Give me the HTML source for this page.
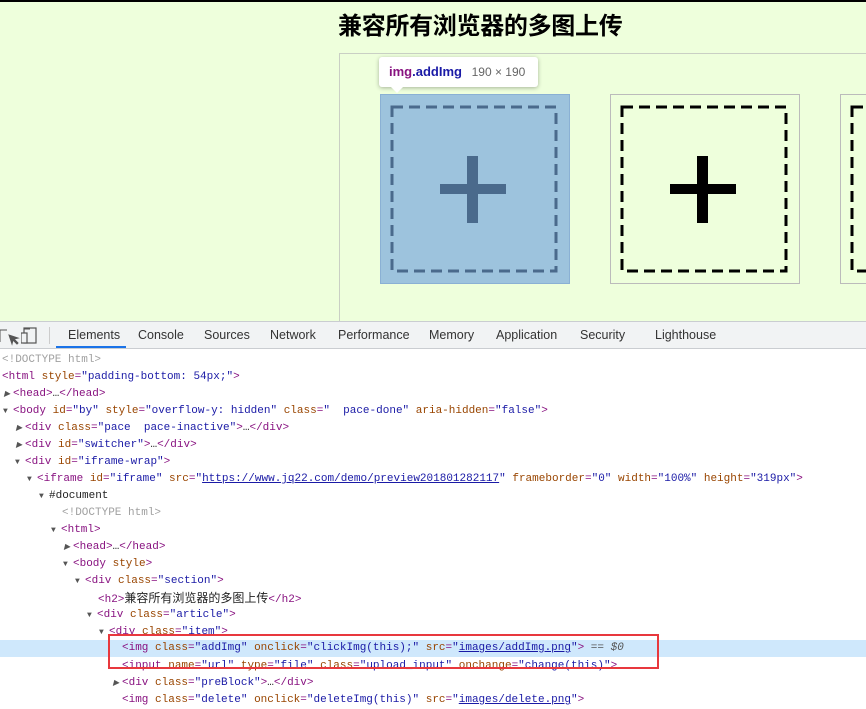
<!DOCTYPE html>
<html><head><style>
*{margin:0;padding:0;box-sizing:border-box}
body{width:866px;height:708px;overflow:hidden;background:#fff;font-family:"Liberation Sans",sans-serif;position:relative}
.top{position:absolute;left:0;top:0;width:866px;height:321px;background:#eeffdc;border-top:2px solid #000}
h2{position:absolute;left:338px;top:4px;font-size:24px;font-weight:bold;font-family:"Liberation Sans","Noto Sans CJK SC",sans-serif;color:#000;letter-spacing:-0.3px}
.art{position:absolute;left:339px;top:53px;width:540px;height:280px;border:1px solid #c9cfc4}
.box{position:absolute;top:94px;width:190px;height:190px;border:1px solid #bbb}
.tip{position:absolute;left:379px;top:57px;width:159px;height:30px;background:#fff;border-radius:3px;box-shadow:0 1px 4px rgba(0,0,0,.3);font-size:13px;line-height:30px;padding-left:10px}
.tip:after{content:"";position:absolute;left:12px;bottom:-6px;border:6px solid transparent;border-top-color:#fff;border-bottom:0}
.bar{position:absolute;left:0;top:321px;width:866px;height:28px;background:#f1f3f4;border-top:1px solid #cacdd1;border-bottom:1px solid #cacdd1;font-size:12.5px;color:#333}
.bar span{position:absolute;top:6px}
.code{position:absolute;left:0;top:352px;width:866px;font-family:"Liberation Mono",monospace;font-size:11px}
.l{position:absolute;height:17px;line-height:17px;white-space:pre;color:#881280}
.a{color:#994500}.v{color:#1a1aa6}.g{color:#a0a0a0}.k{color:#222}
.u{color:#1a1aa6;text-decoration:underline}
.ar{position:absolute;font-size:8px;color:#555;top:0}
</style></head><body>
<div class="top">
<h2>兼容所有浏览器的多图上传</h2>
</div>
<div class="art"></div>
<div class="box" style="left:380px;background:#9dc3dd;border-color:#8ab0d4">
<svg width="190" height="190" style="position:absolute;left:-1px;top:-1px"><rect x="12" y="13" width="164" height="164" fill="none" stroke="#4a6a8c" stroke-width="3" stroke-dasharray="11,6"/><rect x="60" y="90" width="66" height="10" fill="#4a6a8c"/><rect x="87" y="62" width="11" height="67" fill="#4a6a8c"/></svg></div>
<div class="box" style="left:610px">
<svg width="190" height="190" style="position:absolute;left:-1px;top:-1px"><rect x="12" y="13" width="164" height="164" fill="none" stroke="#000" stroke-width="3" stroke-dasharray="11,6"/><rect x="60" y="90" width="66" height="10" fill="#000"/><rect x="87" y="62" width="11" height="67" fill="#000"/></svg></div>
<div class="box" style="left:840px;width:40px">
<svg width="40" height="190" style="position:absolute;left:-1px;top:-1px"><rect x="12" y="13" width="164" height="164" fill="none" stroke="#000" stroke-width="3" stroke-dasharray="11,6"/></svg></div>
<div class="tip"><b style="color:#881280">img</b><b style="color:#1a1aa6">.addImg</b> <span style="color:#666;font-size:12px;margin-left:6px">190 × 190</span></div>
<div class="bar">
<svg width="30" height="26" style="position:absolute;left:0;top:1px"><path d="M0 7h7M0 7v12M9 12l3 9 1-4 4 4 1-1-4-4 4-1z" stroke="#555" fill="#555" stroke-width="1"/><rect x="24" y="6" width="10" height="14" fill="none" stroke="#555"/></svg>
<svg width="20" height="26" style="position:absolute;left:21px;top:1px"><rect x="3" y="5" width="12" height="15" fill="none" stroke="#555" stroke-width="1.2"/><rect x="0" y="10" width="6" height="10" fill="#f1f3f4" stroke="#555" stroke-width="1.2"/></svg>
<div style="position:absolute;left:49px;top:5px;width:1px;height:17px;background:#ccc"></div>
<span style="left:68px">Elements</span>
<div style="position:absolute;left:56px;top:24px;width:70px;height:2px;background:#1a73e8"></div>
<span style="left:138px">Console</span>
<span style="left:204px">Sources</span>
<span style="left:270px">Network</span>
<span style="left:338px">Performance</span>
<span style="left:429px">Memory</span>
<span style="left:496px">Application</span>
<span style="left:580px">Security</span>
<span style="left:655px">Lighthouse</span>
</div>
<div style="position:absolute;left:0;top:640px;width:866px;height:17px;background:#cfe8fc"></div>
<div style="position:absolute;left:108px;top:634px;width:551px;height:35px;border:2px solid #e8383d;z-index:5"></div>
<div class="code">
<div class="l g" style="left:2px;top:0">&lt;!DOCTYPE html&gt;</div>
<div class="l" style="left:2px;top:17px">&lt;html <span class="a">style</span>=<span class="v">"padding-bottom: 54px;"</span>&gt;</div>
<div class="l" style="left:13px;top:34px"><i class="ar" style="left:-9px">▶</i>&lt;head&gt;<span class="k">…</span>&lt;/head&gt;</div>
<div class="l" style="left:13px;top:51px"><i class="ar" style="left:-10px">▼</i>&lt;body <span class="a">id</span>=<span class="v">"by"</span> <span class="a">style</span>=<span class="v">"overflow-y: hidden"</span> <span class="a">class</span>=<span class="v">"  pace-done"</span> <span class="a">aria-hidden</span>=<span class="v">"false"</span>&gt;</div>
<div class="l" style="left:25px;top:68px"><i class="ar" style="left:-9px">▶</i>&lt;div <span class="a">class</span>=<span class="v">"pace  pace-inactive"</span>&gt;<span class="k">…</span>&lt;/div&gt;</div>
<div class="l" style="left:25px;top:85px"><i class="ar" style="left:-9px">▶</i>&lt;div <span class="a">id</span>=<span class="v">"switcher"</span>&gt;<span class="k">…</span>&lt;/div&gt;</div>
<div class="l" style="left:25px;top:102px"><i class="ar" style="left:-10px">▼</i>&lt;div <span class="a">id</span>=<span class="v">"iframe-wrap"</span>&gt;</div>
<div class="l" style="left:37px;top:119px"><i class="ar" style="left:-10px">▼</i>&lt;iframe <span class="a">id</span>=<span class="v">"iframe"</span> <span class="a">src</span>=<span class="v">"<span class="u">https://www.jq22.com/demo/preview201801282117</span>"</span> <span class="a">frameborder</span>=<span class="v">"0"</span> <span class="a">width</span>=<span class="v">"100%"</span> <span class="a">height</span>=<span class="v">"319px"</span>&gt;</div>
<div class="l k" style="left:49px;top:136px"><i class="ar" style="left:-10px">▼</i>#document</div>
<div class="l g" style="left:62px;top:153px">&lt;!DOCTYPE html&gt;</div>
<div class="l" style="left:61px;top:170px"><i class="ar" style="left:-10px">▼</i>&lt;html&gt;</div>
<div class="l" style="left:73px;top:187px"><i class="ar" style="left:-9px">▶</i>&lt;head&gt;<span class="k">…</span>&lt;/head&gt;</div>
<div class="l" style="left:73px;top:204px"><i class="ar" style="left:-10px">▼</i>&lt;body <span class="a">style</span>&gt;</div>
<div class="l" style="left:85px;top:221px"><i class="ar" style="left:-10px">▼</i>&lt;div <span class="a">class</span>=<span class="v">"section"</span>&gt;</div>
<div class="l" style="left:98px;top:238px">&lt;h2&gt;<span class="k" style="font-family:'Liberation Sans','Noto Sans CJK SC',sans-serif;font-size:12px">兼容所有浏览器的多图上传</span>&lt;/h2&gt;</div>
<div class="l" style="left:97px;top:255px"><i class="ar" style="left:-10px">▼</i>&lt;div <span class="a">class</span>=<span class="v">"article"</span>&gt;</div>
<div class="l" style="left:109px;top:272px"><i class="ar" style="left:-10px">▼</i>&lt;div <span class="a">class</span>=<span class="v">"item"</span>&gt;</div>
<div class="l" style="left:122px;top:288px">&lt;img <span class="a">class</span>=<span class="v">"addImg"</span> <span class="a">onclick</span>=<span class="v">"clickImg(this);"</span> <span class="a">src</span>=<span class="v">"<span class="u">images/addImg.png</span>"</span>&gt; <span style="color:#555">== <i>$0</i></span></div>
<div class="l" style="left:122px;top:306px">&lt;input <span class="a">name</span>=<span class="v">"url"</span> <span class="a">type</span>=<span class="v">"file"</span> <span class="a">class</span>=<span class="v">"upload_input"</span> <span class="a">onchange</span>=<span class="v">"change(this)"</span>&gt;</div>
<div class="l" style="left:122px;top:323px"><i class="ar" style="left:-9px">▶</i>&lt;div <span class="a">class</span>=<span class="v">"preBlock"</span>&gt;<span class="k">…</span>&lt;/div&gt;</div>
<div class="l" style="left:122px;top:340px">&lt;img <span class="a">class</span>=<span class="v">"delete"</span> <span class="a">onclick</span>=<span class="v">"deleteImg(this)"</span> <span class="a">src</span>=<span class="v">"<span class="u">images/delete.png</span>"</span>&gt;</div>
</div>
</body></html>
